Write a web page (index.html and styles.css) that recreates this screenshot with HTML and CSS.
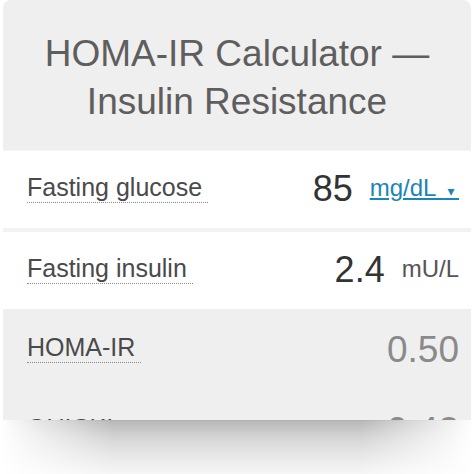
FILE: index.html
```html
<!DOCTYPE html>
<html lang="en">
<head>
    <meta charset="UTF-8">
    <meta name="viewport" content="width=device-width, initial-scale=1.0">
    <title>HOMA-IR Calculator</title>
    <link rel="stylesheet" href="styles.css">
</head>
<body>
    <div class="widget">
        <div class="card">
            <h1 class="title">HOMA-IR Calculator —<br>Insulin Resistance</h1>

            <div class="inputs">
                <div class="row">
                    <span class="label">Fasting glucose</span>
                    <span class="value">85</span>
                    <a class="unit unit-link" href="#">mg/dL&nbsp;<span class="caret">&nbsp;▾&nbsp;</span></a>
                </div>
                <div class="row">
                    <span class="label">Fasting insulin</span>
                    <span class="value">2.4</span>
                    <span class="unit">mU/L</span>
                </div>
            </div>

            <div class="results">
                <div class="row result">
                    <span class="label">HOMA-IR</span>
                    <span class="value">0.50</span>
                </div>
                <div class="row result">
                    <span class="label">QUICKI</span>
                    <span class="value">0.43</span>
                </div>
            </div>
        </div>
        <div class="shadow"></div>
    </div>
</body>
</html>
```
FILE: styles.css
```css
body, html {
    margin: 0;
    padding: 0;
    background: #ffffff;
    font-family: 'Liberation Sans', Arial, sans-serif;
}

.widget {
    width: 474px;
}

.card {
    margin: 0 3px;
    height: 420px;
    overflow: hidden;
    border-radius: 8px 8px 0 0;
    background: #efefef;
}

.title {
    margin: 0;
    padding: 30px 0 24px;
    font-size: 37px;
    line-height: 48px;
    font-weight: normal;
    text-align: center;
    color: #5e5e5e;
}

.inputs {
    display: flex;
    flex-direction: column;
    gap: 4px;
    background: #f2f2f2;
    border-top: 1px solid #f4f4f4;
}

/* items sit at fixed offsets from the row top, like the original widget */
.row {
    display: flex;
    align-items: flex-start;
    height: 77px;
    padding: 0 12px 0 24px;
    background: #ffffff;
}

.label {
    margin: 21px auto 0 0;
    padding-right: 6px;
    font-size: 25px;
    line-height: 30px;
    color: #4a4a4a;
    border-bottom: 1px dotted #8a8a8a;
}

.value {
    margin-top: 17px;
    font-size: 36px;
    line-height: 42px;
    color: #333333;
}

.unit {
    margin: 23px 0 0 17px;
    font-size: 24px;
    line-height: 28px;
    color: #555555;
}

.unit-link {
    color: #1a86b8;
    text-decoration: underline;
}

.caret {
    font-size: 14px;
    font-family: 'DejaVu Sans', sans-serif;
}

.row.result {
    height: 81px;
    background: #efefef;
}

.result .label {
    margin-top: 23px;
}

.result .value {
    margin-top: 20px;
    font-size: 37px;
    color: #8a8a8a;
}

.shadow {
    height: 54px;
    border-top: 1px solid #b0b0b0;
    background: linear-gradient(to bottom, rgba(0, 0, 0, 0.28) 0%, rgba(0, 0, 0, 0.17) 30%, rgba(0, 0, 0, 0.1) 60%, rgba(0, 0, 0, 0.03) 100%);
    -webkit-mask-image: linear-gradient(to right, transparent 0%, #000 24%, #000 76%, transparent 100%);
    mask-image: linear-gradient(to right, transparent 0%, #000 24%, #000 76%, transparent 100%);
}
```
